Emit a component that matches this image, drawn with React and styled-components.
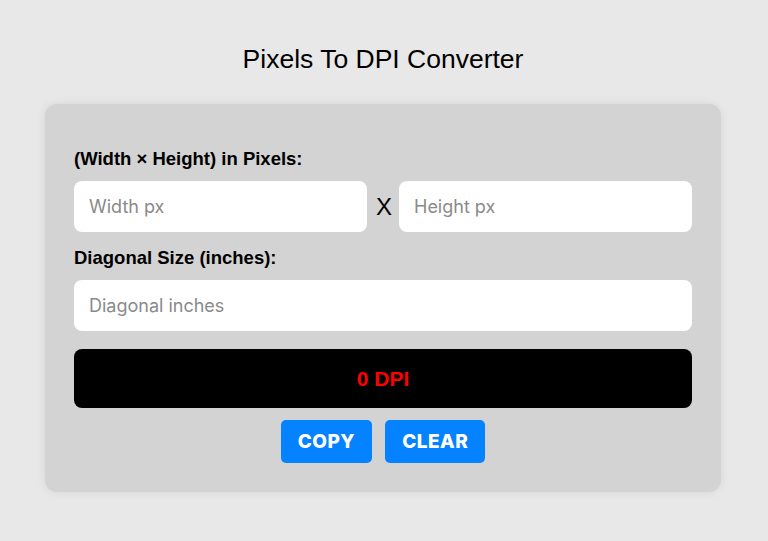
import React, { useState } from 'react'
import styled, { createGlobalStyle } from 'styled-components'

const GlobalStyle = createGlobalStyle`
  html, body {
    margin: 0;
    padding: 0;
    background: #e8e8e8;
  }
  body {
    font-family: "Liberation Sans", Arial, sans-serif;
  }
`

const Page = styled.div`
  display: flex;
  flex-direction: column;
  align-items: center;
  min-height: 541px;
  padding-top: 43px;
  padding-right: 2px;
  box-sizing: border-box;
`

const Title = styled.h1`
  margin: 0 0 29px;
  font-size: 26.5px;
  font-weight: 400;
  color: #000;
  line-height: 32px;
`

const Card = styled.div`
  width: 676px;
  box-sizing: border-box;
  background: #d3d3d3;
  border-radius: 12px;
  box-shadow: 0 0 10px rgba(0, 0, 0, 0.08);
  padding: 45px 29px 29px;
  display: flex;
  flex-direction: column;
`

const Label = styled.label`
  font-size: 18.5px;
  font-weight: 700;
  color: #000;
  line-height: 20px;
  margin-bottom: 12px;
`

const Row = styled.div`
  display: flex;
  align-items: center;
  gap: 9px;
  margin-bottom: 16px;
`

const Times = styled.span`
  font-size: 24px;
  color: #000;
  width: 14px;
  text-align: center;
`

const Input = styled.input`
  flex: ${props => (props.$grow ? '1 1 0' : 'none')};
  min-width: 0;
  height: 51px;
  box-sizing: border-box;
  border: none;
  border-radius: 8px;
  background: #fff;
  padding: 0 15px;
  font-family: Inter, "Liberation Sans", sans-serif;
  font-size: 18px;
  color: #222;
  outline: none;
  &::placeholder {
    color: #8a8a8a;
  }
`

const Result = styled.div`
  height: 59px;
  margin-top: 18px;
  border-radius: 8px;
  background: #000;
  color: #ff0000;
  display: flex;
  align-items: center;
  justify-content: center;
  font-size: 21px;
  font-weight: 700;
`

const Actions = styled.div`
  display: flex;
  justify-content: center;
  gap: 13px;
  margin-top: 12px;
`

const Button = styled.button`
  height: 43px;
  padding: 0 ${props => props.$pad}px;
  border: none;
  border-radius: 5px;
  background: #0582ff;
  color: #fff;
  font-family: Inter, "Liberation Sans", sans-serif;
  font-size: 19px;
  font-weight: 800;
  letter-spacing: 0.5px;
  cursor: pointer;
`

export default function App() {
  const [w, setW] = useState('')
  const [h, setH] = useState('')
  const [d, setD] = useState('')

  const diag = Math.sqrt(Number(w) ** 2 + Number(h) ** 2)
  const dpi = Number(d) > 0 ? Math.round(diag / Number(d)) : 0

  return (
    <Page>
      <GlobalStyle />
      <Title>Pixels To DPI Converter</Title>
      <Card>
        <Label>(Width × Height) in Pixels:</Label>
        <Row>
          <Input $grow placeholder="Width px" value={w} onChange={e => setW(e.target.value)} />
          <Times>X</Times>
          <Input $grow placeholder="Height px" value={h} onChange={e => setH(e.target.value)} />
        </Row>
        <Label>Diagonal Size (inches):</Label>
        <Input placeholder="Diagonal inches" value={d} onChange={e => setD(e.target.value)} />
        <Result>{dpi} DPI</Result>
        <Actions>
          <Button $pad={17}>COPY</Button>
          <Button $pad={17} onClick={() => { setW(''); setH(''); setD('') }}>CLEAR</Button>
        </Actions>
      </Card>
    </Page>
  )
}
